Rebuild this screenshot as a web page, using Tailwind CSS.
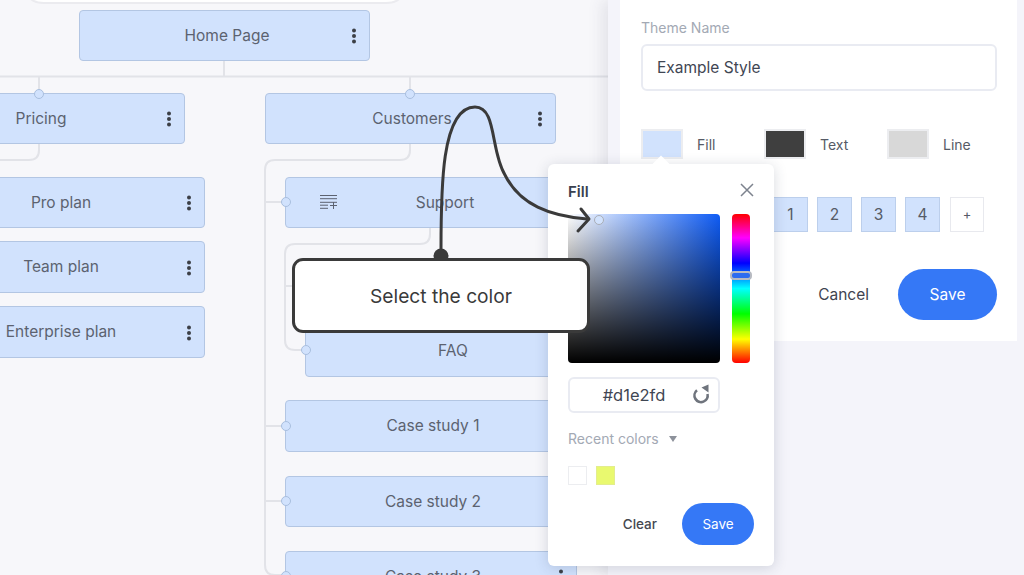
<!DOCTYPE html>
<html lang="en">
<head>
    <meta charset="UTF-8">
    <title>Theme colors</title>
    <script src="https://cdn.jsdelivr.net/npm/@tailwindcss/browser@4"></script>
</head>
<body class="m-0 w-[1024px] h-[575px] overflow-hidden bg-[#f7f7fa] font-['Inter','Liberation_Sans',sans-serif] text-[15.5px] text-[#5c6270]">
<div class="relative w-[1024px] h-[575px] overflow-hidden">

    <!-- tree lines -->
    <svg class="absolute left-0 top-0" width="1024" height="575" fill="none" stroke="#e2e3e8" stroke-width="2">
        <path d="M28 -6 C30 1 36 3 44 3 H386 C394 3 400 1 402 -6" stroke="#ebebef" fill="#ffffff"/>
        <path d="M224 61 V76.500 M0 76.500 H608 M39 76 V93 M410 76 V93"/>
        <path d="M39 144 V150 Q39 160 29 160 H0"/>
        <path d="M410 144 V150 Q410 160 400 160 H275 Q265 160 265 170 V565 Q265 575 275 575 H285"/>
        <path d="M265 202 H285 M265 426 H285 M265 501 H285"/>
        <path d="M430 228 V234 Q430 244 420 244 H295 Q285 244 285 254 V340 Q285 350 295 350 H305"/>
        <path d="M285 286 H305"/>
    </svg>

    <!-- left branch -->
    <div class="absolute left-[79px] top-[10px] w-[291px] h-[51px] bg-[#d1e2fd] border border-[#b3c6e3] rounded flex items-center justify-center pl-[5px]">Home Page
        <svg class="absolute right-[12px] top-[17px]" width="6" height="16" fill="#3c3f46"><circle cx="3" cy="2.500" r="2"/><circle cx="3" cy="8" r="2"/><circle cx="3" cy="13.500" r="2"/></svg>
    </div>
    <div class="absolute left-[-107px] top-[93px] w-[292px] h-[51px] bg-[#d1e2fd] border border-[#b3c6e3] rounded flex items-center justify-center pl-[4px]">Pricing
        <svg class="absolute right-[12px] top-[17px]" width="6" height="16" fill="#3c3f46"><circle cx="3" cy="2.500" r="2"/><circle cx="3" cy="8" r="2"/><circle cx="3" cy="13.500" r="2"/></svg>
    </div>
    <div class="absolute left-[-87px] top-[177px] w-[292px] h-[51px] bg-[#d1e2fd] border border-[#b3c6e3] rounded flex items-center justify-center pl-[4px]">Pro plan
        <svg class="absolute right-[12px] top-[17px]" width="6" height="16" fill="#3c3f46"><circle cx="3" cy="2.500" r="2"/><circle cx="3" cy="8" r="2"/><circle cx="3" cy="13.500" r="2"/></svg>
    </div>
    <div class="absolute left-[-87px] top-[241px] w-[292px] h-[52px] bg-[#d1e2fd] border border-[#b3c6e3] rounded flex items-center justify-center pl-[4px]">Team plan
        <svg class="absolute right-[12px] top-[18px]" width="6" height="16" fill="#3c3f46"><circle cx="3" cy="2.500" r="2"/><circle cx="3" cy="8" r="2"/><circle cx="3" cy="13.500" r="2"/></svg>
    </div>
    <div class="absolute left-[-87px] top-[306px] w-[292px] h-[52px] bg-[#d1e2fd] border border-[#b3c6e3] rounded flex items-center justify-center pl-[4px]">Enterprise plan
        <svg class="absolute right-[12px] top-[18px]" width="6" height="16" fill="#3c3f46"><circle cx="3" cy="2.500" r="2"/><circle cx="3" cy="8" r="2"/><circle cx="3" cy="13.500" r="2"/></svg>
    </div>

    <!-- right branch -->
    <div class="absolute left-[265px] top-[93px] w-[291px] h-[51px] bg-[#d1e2fd] border border-[#b3c6e3] rounded flex items-center justify-center pl-[3px]">Customers
        <svg class="absolute right-[12px] top-[17px]" width="6" height="16" fill="#3c3f46"><circle cx="3" cy="2.500" r="2"/><circle cx="3" cy="8" r="2"/><circle cx="3" cy="13.500" r="2"/></svg>
    </div>
    <div class="absolute left-[285px] top-[177px] w-[292px] h-[51px] bg-[#d1e2fd] border border-[#b3c6e3] rounded flex items-center justify-center pl-[28px]">Support
        <svg class="absolute left-[34px] top-[17px]" width="18" height="15" fill="none" stroke="#5c6270" stroke-width="1"><path d="M0 .500 H17 M0 3.700 H17 M0 7.300 H17 M0 10.200 H8 M0 13.300 H8 M10 10.500 H17 M13.500 7 V14"/></svg>
    </div>
    <div class="absolute left-[305px] top-[325px] w-[292px] h-[52px] bg-[#d1e2fd] border border-[#b3c6e3] rounded flex items-center justify-center pl-[4px]">FAQ</div>
    <div class="absolute left-[285px] top-[400px] w-[292px] h-[52px] bg-[#d1e2fd] border border-[#b3c6e3] rounded flex items-center justify-center pl-[4px]">Case study 1</div>
    <div class="absolute left-[285px] top-[476px] w-[292px] h-[51px] bg-[#d1e2fd] border border-[#b3c6e3] rounded flex items-center justify-center pl-[4px]">Case study 2</div>
    <div class="absolute left-[285px] top-[551px] w-[292px] h-[51px] bg-[#d1e2fd] border border-[#b3c6e3] rounded flex items-center justify-center pl-[4px]">Case study 3
        <svg class="absolute right-[12px] top-[17px]" width="6" height="16" fill="#3c3f46"><circle cx="3" cy="2.500" r="2"/><circle cx="3" cy="8" r="2"/><circle cx="3" cy="13.500" r="2"/></svg>
    </div>

    <!-- connector dots -->
    <span class="absolute left-[34px] top-[89px] w-2.5 h-2.5 rounded-full bg-[#d1e2fd] border border-[#a9bfdf]"></span>
    <span class="absolute left-[405px] top-[89px] w-2.5 h-2.5 rounded-full bg-[#d1e2fd] border border-[#a9bfdf]"></span>
    <span class="absolute left-[281px] top-[197px] w-2.5 h-2.5 rounded-full bg-[#d1e2fd] border border-[#a9bfdf]"></span>
    <span class="absolute left-[301px] top-[345px] w-2.5 h-2.5 rounded-full bg-[#d1e2fd] border border-[#a9bfdf]"></span>
    <span class="absolute left-[281px] top-[421px] w-2.5 h-2.5 rounded-full bg-[#d1e2fd] border border-[#a9bfdf]"></span>
    <span class="absolute left-[281px] top-[496px] w-2.5 h-2.5 rounded-full bg-[#d1e2fd] border border-[#a9bfdf]"></span>
    <span class="absolute left-[281px] top-[571px] w-2.5 h-2.5 rounded-full bg-[#d1e2fd] border border-[#a9bfdf]"></span>

    <!-- side panel -->
    <div class="absolute left-[608px] top-0 w-[416px] h-[575px] bg-[#f4f4fa] shadow-[-6px_0_14px_rgba(60,60,90,0.10)]">
        <div class="ml-[12px] w-[397px] h-[341px] bg-white pl-[21px] pr-[20px] pt-[19px] text-[#3f4450]">
            <div class="text-[14px] leading-[18px] text-[#a3a9b4]">Theme Name</div>
            <div class="mt-[7px] h-[47px] border-2 border-[#e9ebf2] rounded-md flex items-center pl-[14px] pt-[1px] text-[#3f4653]">Example Style</div>
            <div class="mt-[38px] flex items-center h-[30px] text-[14px] text-[#565b66]">
                <span class="w-[42px] h-[30px] border-2 border-[#ecedf0] bg-[#d1e2fd]"></span>
                <span class="ml-[14px] w-[67px]">Fill</span>
                <span class="w-[42px] h-[30px] border-2 border-[#ecedf0] bg-[#3f3f3f]"></span>
                <span class="ml-[14px] w-[67px]">Text</span>
                <span class="w-[42px] h-[30px] border-2 border-[#ecedf0] bg-[#d8d8d8]"></span>
                <span class="ml-[14px]">Line</span>
            </div>
            <div class="mt-[38px] ml-[132px] flex gap-[9px] text-[#565b66]">
                <span class="w-[35px] h-[35px] bg-[#d1e2fd] border border-[#bccfec] flex items-center justify-center">1</span>
                <span class="w-[35px] h-[35px] bg-[#d1e2fd] border border-[#bccfec] flex items-center justify-center">2</span>
                <span class="w-[35px] h-[35px] bg-[#d1e2fd] border border-[#bccfec] flex items-center justify-center">3</span>
                <span class="w-[35px] h-[35px] bg-[#d1e2fd] border border-[#bccfec] flex items-center justify-center">4</span>
                <span class="ml-[1px] w-[34px] h-[35px] border border-[#e8e9ee] flex items-center justify-center text-[13px]">+</span>
            </div>
            <div class="mt-[37px] flex justify-end items-center">
                <span class="text-[#3f4450] mr-[29px]">Cancel</span>
                <span class="w-[99px] h-[51px] rounded-full bg-[#3578f6] text-white flex items-center justify-center">Save</span>
            </div>
        </div>
    </div>

    <!-- color popover -->
    <div class="absolute left-[548px] top-[164px] w-[226px] h-[402px] bg-white rounded-md shadow-[0_2px_14px_rgba(40,50,80,0.18)] px-[20px]">
        <span class="absolute left-[107px] top-[-6px] w-3 h-3 bg-white rotate-45"></span>
        <div class="flex justify-between items-start pt-[19px] h-[50px]">
            <span class="text-[15px] leading-[17px] font-semibold text-[#3a4150]">Fill</span>
            <svg width="14" height="14" fill="none" stroke="#7d838e" stroke-width="1.500"><path d="M1 1 L13 13 M13 1 L1 13"/></svg>
        </div>
        <div class="flex">
            <div class="relative w-[152px] h-[149px] rounded-sm overflow-hidden bg-[linear-gradient(to_top,#000,transparent),linear-gradient(to_right,#fff,#0f5cf5)]">
                <span class="absolute left-[26px] top-[1px] w-[10px] h-[10px] rounded-full border border-[#a9adb5] bg-[#d1e2fd]"></span>
            </div>
            <div class="relative ml-[12px] w-[18px] h-[149px] rounded bg-[linear-gradient(to_bottom,#ff0000,#ff00ff_16%,#0000ff_33%,#00ffff_50%,#00ff00_67%,#ffff00_84%,#ff0000)]">
                <span class="absolute left-[-2px] top-[57px] w-[22px] h-[9px] bg-[#2c6cf0] border-2 border-[#b7bac1] rounded-sm"></span>
            </div>
        </div>
        <div class="mt-[14px] w-[152px] h-[36px] border-2 border-[#e9ebf2] rounded-md flex items-center justify-center pr-[20px] text-[16.500px] text-[#3f4653] relative">#d1e2fd
            <svg class="absolute right-[7px] top-[5px]" width="20" height="21" fill="none" stroke="#6f747d" stroke-width="2.600"><path d="M6 6.300 A6.600 6.600 0 1 0 16.500 10"/><path d="M10.500 3.500 L17.500 .500 L17.500 8.500 Z" fill="#6f747d" stroke="none"/></svg>
        </div>
        <div class="mt-[17px] flex items-center text-[14px] leading-[18px] text-[#a3a9b4]">Recent colors
            <svg class="ml-[9px]" width="10" height="6" fill="#8d929b"><path d="M1 0 H9 L5 6 Z"/></svg>
        </div>
        <div class="mt-[18px] flex gap-[9px]">
            <span class="w-[19px] h-[19px] border border-[#ecedf0] bg-white"></span>
            <span class="w-[19px] h-[19px] border border-[#e3ed8e] bg-[#e9f96f]"></span>
        </div>
        <div class="mt-[18px] flex justify-end items-center text-[13.500px]">
            <span class="text-[#454850] font-medium mr-[25px]">Clear</span>
            <span class="w-[72px] h-[42px] rounded-full bg-[#3578f6] text-white flex items-center justify-center">Save</span>
        </div>
    </div>

    <!-- callout with arrow -->
    <svg class="absolute left-0 top-0" width="1024" height="575" fill="none" stroke="#3a3a3a" stroke-width="3" stroke-linecap="round" stroke-linejoin="round">
        <path d="M441 250 C441 190 441 107 475 107 C497 107 490 150 505 175 C520 205 550 216 587 219"/>
        <path d="M581 209 L589 219 L578 231"/>
        <circle cx="441" cy="256" r="7.500" fill="#3a3a3a" stroke="none"/>
    </svg>
    <div class="absolute left-[292px] top-[258px] w-[298px] h-[75px] bg-white border-[3px] border-[#3a3a3a] rounded-[11px] flex items-center justify-center pt-[1px] text-[19.200px] text-[#3a3a3a]">Select the color</div>
</div>
</body>
</html>
